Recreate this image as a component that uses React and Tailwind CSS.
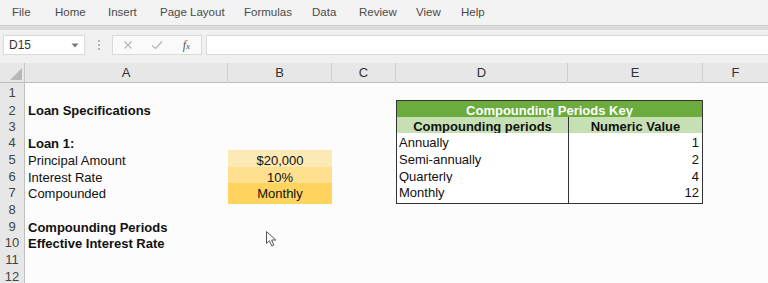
import React from "react";

const FONT = { fontFamily: '"Liberation Sans", Arial, sans-serif' };

const menu = [
  ["File", "w-[43px]"],
  ["Home", "w-[53px]"],
  ["Insert", "w-[52px]"],
  ["Page Layout", "w-[84px]"],
  ["Formulas", "w-[68px]"],
  ["Data", "w-[47px]"],
  ["Review", "w-[57px]"],
  ["View", "w-[45px]"],
  ["Help", "w-[45px]"],
];

const heights = [
  "h-[17px]", "h-[17px]", "h-[16px]", "h-[17px]", "h-[17px]", "h-[16px]",
  "h-[17px]", "h-[17px]", "h-[16px]", "h-[17px]", "h-[17px]", "h-[16px]",
];

const colA = {
  2: ["Loan Specifications", true],
  4: ["Loan 1:", true],
  5: ["Principal Amount", false],
  6: ["Interest Rate", false],
  7: ["Compounded", false],
  9: ["Compounding Periods", true],
  10: ["Effective Interest Rate", true],
};

const colB = {
  5: ["$20,000", "bg-[#fde9b4]"],
  6: ["10%", "bg-[#fee08e]"],
  7: ["Monthly", "bg-[#fed45e]"],
};

const keyRows = {
  4: ["Annually", "1"],
  5: ["Semi-annually", "2"],
  6: ["Quarterly", "4"],
  7: ["Monthly", "12"],
};

function Row({ n, h }) {
  const a = colA[n];
  const b = colB[n];
  const k = keyRows[n];
  return (
    <div className={`grid grid-cols-[25px_203px_104px_64px_172px_135px_65px] ${h}`}>
      <div className="flex items-center justify-center bg-[#e7e7e7] border-r border-b border-r-[#bfbfbf] border-b-[#d3d3d3] text-[13px] text-[#444]">
        {n}
      </div>
      <div className={`flex items-center pl-[3px] text-[13px] text-[#111] whitespace-nowrap ${a && a[1] ? "font-bold" : ""}`}>
        {a ? a[0] : ""}
      </div>
      <div className={`flex items-center justify-center text-[13px] text-[#111] ${b ? b[1] : ""}`}>
        {b ? b[0] : ""}
      </div>
      <div />
      {n === 2 ? (
        <div className="col-span-2 flex items-center justify-center bg-[#6cab3e] border border-[#333] text-[13px] font-bold text-white">
          Compounding Periods Key
        </div>
      ) : n === 3 ? (
        <>
          <div className="flex items-center justify-center bg-[#c6e0b4] border-l border-b border-[#333] text-[13px] font-bold text-[#111]">
            Compounding periods
          </div>
          <div className="flex items-center justify-center bg-[#c6e0b4] border-l border-r border-b border-[#333] text-[13px] font-bold text-[#111]">
            Numeric Value
          </div>
        </>
      ) : k ? (
        <>
          <div className="flex items-center pl-[2px] bg-white border-l border-b border-[#333] text-[13px] text-[#111]">
            {k[0]}
          </div>
          <div className="flex items-center justify-end pr-[3px] bg-white border-l border-r border-b border-[#333] text-[13px] text-[#111]">
            {k[1]}
          </div>
        </>
      ) : (
        <>
          <div />
          <div />
        </>
      )}
      <div />
    </div>
  );
}

export default function App() {
  return (
    <div className="relative w-[768px] h-[283px] overflow-hidden bg-[#fcfcfc]" style={FONT}>
      {/* Menu bar */}
      <div className="flex h-[25px] items-center bg-[#f3f3f3] pl-[12px] text-[11.5px] text-[#4a4a4a]">
        {menu.map(([t, w]) => (
          <div key={t} className={`${w} whitespace-nowrap`}>
            {t}
          </div>
        ))}
      </div>
      <div className="h-[5px] bg-[#dcdcdc] border-t border-[#cdcdcd]" />

      {/* Formula bar */}
      <div className="flex h-[33px] items-start bg-[#f0f0f0] pt-[5px]">
        <div className="ml-[3px] flex h-[20px] w-[82px] items-center justify-between bg-white border border-[#dadada] pl-[5px] pr-[5px] text-[12px] text-[#333]">
          <span>D15</span>
          <svg width="8" height="5" viewBox="0 0 8 5">
            <path d="M0.5 0.5 L7.5 0.5 L4 4.5 Z" fill="#777" />
          </svg>
        </div>
        <div className="flex h-[20px] w-[27px] flex-col items-center justify-center gap-[2px]">
          <span className="h-[2px] w-[2px] bg-[#b5b5b5]" />
          <span className="h-[2px] w-[2px] bg-[#b5b5b5]" />
          <span className="h-[2px] w-[2px] bg-[#b5b5b5]" />
        </div>
        <div className="flex h-[20px] w-[90px] items-center bg-[#fafafa] border border-[#dadada]">
          <div className="flex w-[30px] justify-center">
            <svg width="10" height="10" viewBox="0 0 10 10">
              <path d="M1.5 1.5 L8.5 8.5 M8.5 1.5 L1.5 8.5" stroke="#b3b3b3" strokeWidth="1.2" />
            </svg>
          </div>
          <div className="flex w-[30px] justify-center">
            <svg width="12" height="10" viewBox="0 0 12 10">
              <path d="M1 5.5 L4.5 8.5 L11 1.5" stroke="#b3b3b3" strokeWidth="1.2" fill="none" />
            </svg>
          </div>
          <div
            className="flex w-[30px] justify-center text-[12px] italic text-[#555]"
            style={{ fontFamily: '"Liberation Serif", "Times New Roman", serif' }}
          >
            <span>
              f<span className="text-[9px]">x</span>
            </span>
          </div>
        </div>
        <div className="ml-[4px] h-[20px] flex-1 bg-white border-y border-l border-[#dadada]" />
      </div>

      {/* Column headers */}
      <div className="grid h-[20px] grid-cols-[25px_203px_104px_64px_172px_135px_65px] bg-[#e7e7e7] border-b border-[#bdbdbd] text-[13px] text-[#333]">
        <div className="relative border-r border-[#c8c8c8]">
          <svg className="absolute left-0 top-0" width="25" height="19" viewBox="0 0 25 19">
            <path d="M10 17 L22 17 L22 5 Z" fill="#b8b8b8" />
          </svg>
        </div>
        <div className="flex items-center justify-center border-r border-[#cfcfcf]">A</div>
        <div className="flex items-center justify-center border-r border-[#cfcfcf]">B</div>
        <div className="flex items-center justify-center border-r border-[#cfcfcf]">C</div>
        <div className="flex items-center justify-center border-r border-[#cfcfcf]">D</div>
        <div className="flex items-center justify-center border-r border-[#cfcfcf]">E</div>
        <div className="flex items-center justify-center">F</div>
      </div>

      {/* Rows */}
      <div className="flex flex-col">
        {heights.map((h, i) => (
          <Row key={i} n={i + 1} h={h} />
        ))}
      </div>

      {/* Mouse cursor */}
      <svg className="absolute left-[266px] top-[231px]" width="12" height="17" viewBox="0 0 12 17">
        <path
          d="M0.5 0.5 L0.5 12.5 L3.5 9.8 L5.8 15 L7.8 14.1 L5.6 9 L9.8 9 Z"
          fill="#ffffff"
          stroke="#555"
          strokeWidth="1"
          strokeLinejoin="round"
        />
      </svg>
    </div>
  );
}
